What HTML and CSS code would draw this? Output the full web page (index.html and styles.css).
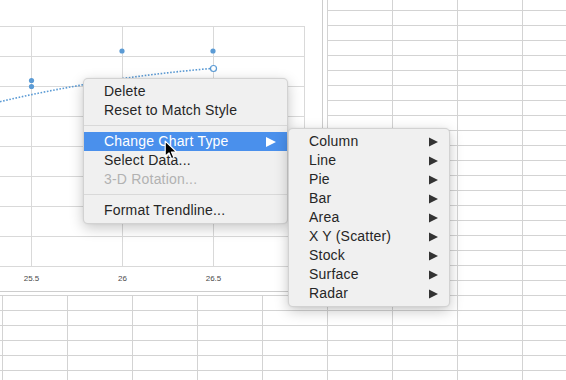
FILE: index.html
```html
<!DOCTYPE html>
<html>
<head>
<meta charset="utf-8">
<link rel="stylesheet" href="styles.css">
</head>
<body>
<div class="sheet">
  <div class="chart">
    <div class="chart-frame">
      <svg class="plot" width="322" height="291" viewBox="0 0 322 291">
        <g class="grid">
          <line x1="0" y1="26.5" x2="305" y2="26.5"/>
          <line x1="0" y1="56.5" x2="305" y2="56.5"/>
          <line x1="0" y1="86.5" x2="305" y2="86.5"/>
          <line x1="0" y1="116.5" x2="305" y2="116.5"/>
          <line x1="0" y1="146.5" x2="305" y2="146.5"/>
          <line x1="0" y1="176.5" x2="305" y2="176.5"/>
          <line x1="0" y1="206.5" x2="305" y2="206.5"/>
          <line x1="0" y1="236.5" x2="305" y2="236.5"/>
          <line x1="0" y1="266.5" x2="305" y2="266.5"/>
          <line x1="31.5" y1="26" x2="31.5" y2="267"/>
          <line x1="122.5" y1="26" x2="122.5" y2="267"/>
          <line x1="213.5" y1="26" x2="213.5" y2="267"/>
          <line x1="304.5" y1="26" x2="304.5" y2="267"/>
        </g>
        <path class="trend" d="M0 101.7 Q 100 78 211 68.5"/>
        <g class="pts">
          <circle cx="122" cy="51" r="2.6"/>
          <circle cx="213" cy="51" r="2.6"/>
          <circle cx="31.5" cy="80.5" r="2.6"/>
          <circle cx="31.5" cy="86.5" r="2.6"/>
        </g>
        <circle class="hollow" cx="213.5" cy="68.5" r="3"/>
        <g class="labels">
          <text x="31.5" y="281">25.5</text>
          <text x="122.5" y="281">26</text>
          <text x="213.5" y="281">26.5</text>
        </g>
      </svg>
    </div>
  </div>

  <div class="menu menu-main">
    <div class="item">Delete</div>
    <div class="item">Reset to Match Style</div>
    <div class="sep"></div>
    <div class="item active"><span class="label">Change Chart Type</span><svg class="arrow" width="10" height="10" viewBox="0 0 10 10"><polygon points="0,0 10,5 0,10"/></svg></div>
    <div class="item">Select Data...</div>
    <div class="item disabled">3-D Rotation...</div>
    <div class="sep"></div>
    <div class="item">Format Trendline...</div>
  </div>

  <div class="menu menu-sub">
    <div class="item"><span class="label">Column</span><svg class="arrow" width="9" height="10" viewBox="0 0 9 10"><polygon points="0,0.5 9,5 0,9.5"/></svg></div>
    <div class="item"><span class="label">Line</span><svg class="arrow" width="9" height="10" viewBox="0 0 9 10"><polygon points="0,0.5 9,5 0,9.5"/></svg></div>
    <div class="item"><span class="label">Pie</span><svg class="arrow" width="9" height="10" viewBox="0 0 9 10"><polygon points="0,0.5 9,5 0,9.5"/></svg></div>
    <div class="item"><span class="label">Bar</span><svg class="arrow" width="9" height="10" viewBox="0 0 9 10"><polygon points="0,0.5 9,5 0,9.5"/></svg></div>
    <div class="item"><span class="label">Area</span><svg class="arrow" width="9" height="10" viewBox="0 0 9 10"><polygon points="0,0.5 9,5 0,9.5"/></svg></div>
    <div class="item"><span class="label">X Y (Scatter)</span><svg class="arrow" width="9" height="10" viewBox="0 0 9 10"><polygon points="0,0.5 9,5 0,9.5"/></svg></div>
    <div class="item"><span class="label">Stock</span><svg class="arrow" width="9" height="10" viewBox="0 0 9 10"><polygon points="0,0.5 9,5 0,9.5"/></svg></div>
    <div class="item"><span class="label">Surface</span><svg class="arrow" width="9" height="10" viewBox="0 0 9 10"><polygon points="0,0.5 9,5 0,9.5"/></svg></div>
    <div class="item"><span class="label">Radar</span><svg class="arrow" width="9" height="10" viewBox="0 0 9 10"><polygon points="0,0.5 9,5 0,9.5"/></svg></div>
  </div>

  <svg class="cursor" width="15" height="21" viewBox="0 0 14 20">
    <path d="M1 1 L1 15.5 L4.6 12.2 L7 17.8 L9.3 16.8 L7 11.4 L11.8 11.4 Z"/>
  </svg>
</div>
</body>
</html>
```

FILE: styles.css
```css
html, body {
  margin: 0;
  padding: 0;
  background: #ffffff;
}

.sheet {
  position: relative;
  width: 566px;
  height: 380px;
  overflow: hidden;
  background-color: #ffffff;
  background-image:
    linear-gradient(to right, #d3d3d3 1px, transparent 1px),
    linear-gradient(to bottom, #d3d3d3 1px, transparent 1px);
  background-size: 65px 15px, 65px 15px;
  background-position: 2px 0, 0 10px;
  font-family: "Liberation Sans", Arial, sans-serif;
}

/* chart object floats over the sheet */
.chart {
  position: absolute;
  left: 0;
  top: 0;
  width: 327px;
  height: 295px;
  background: #ffffff;
}

.chart-frame {
  width: 323px;
  height: 292px;
  box-sizing: border-box;
  border-right: 1px solid #cdcdcd;
  border-bottom: 1px solid #cdcdcd;
}

.plot {
  display: block;
}

.grid line {
  stroke: #d9d9d9;
  stroke-width: 1;
}

.trend {
  fill: none;
  stroke: #5b9bd5;
  stroke-width: 1.6;
  stroke-dasharray: 1.6 1.6;
}

.pts circle {
  fill: #5b9bd5;
}

.hollow {
  fill: #ffffff;
  stroke: #5b9bd5;
  stroke-width: 1.2;
}

.labels text {
  font-family: "Liberation Sans", Arial, sans-serif;
  font-size: 8px;
  fill: #4a4a4a;
  text-anchor: middle;
}

/* context menus */
.menu {
  position: absolute;
  box-sizing: border-box;
  padding: 4px 0;
  background: #f0f0f0;
  border: 1px solid rgba(0, 0, 0, 0.12);
  border-radius: 5px;
  box-shadow: 0 4px 14px rgba(0, 0, 0, 0.22), 0 0 2px rgba(0, 0, 0, 0.08);
  font-family: "Liberation Sans", Arial, sans-serif;
  font-size: 14px;
  letter-spacing: 0.2px;
  color: #262626;
}

.menu-main {
  left: 83px;
  top: 78px;
  width: 205px;
  height: 146px;
  padding-top: 3px;
}

.menu-sub {
  left: 288px;
  top: 128px;
  width: 162px;
  height: 179px;
  padding-top: 3px;
}

.item {
  display: flex;
  align-items: center;
  height: 19px;
  line-height: 19px;
  padding: 0 11px 0 20px;
  white-space: nowrap;
}

.item .label {
  flex: 1;
}

.item.active {
  background: #4a90ec;
  color: #ffffff;
}

.item.disabled {
  color: #b2b2b2;
}

.sep {
  height: 1px;
  margin: 5px 0 6px;
  background: #d9d9d9;
}

.arrow {
  display: block;
  fill: #333333;
}

.item.active .arrow {
  fill: #ffffff;
}

.cursor {
  position: absolute;
  left: 164px;
  top: 140px;
}

.cursor path {
  fill: #000000;
  stroke: #ffffff;
  stroke-width: 1.1;
  stroke-linejoin: round;
}
```
